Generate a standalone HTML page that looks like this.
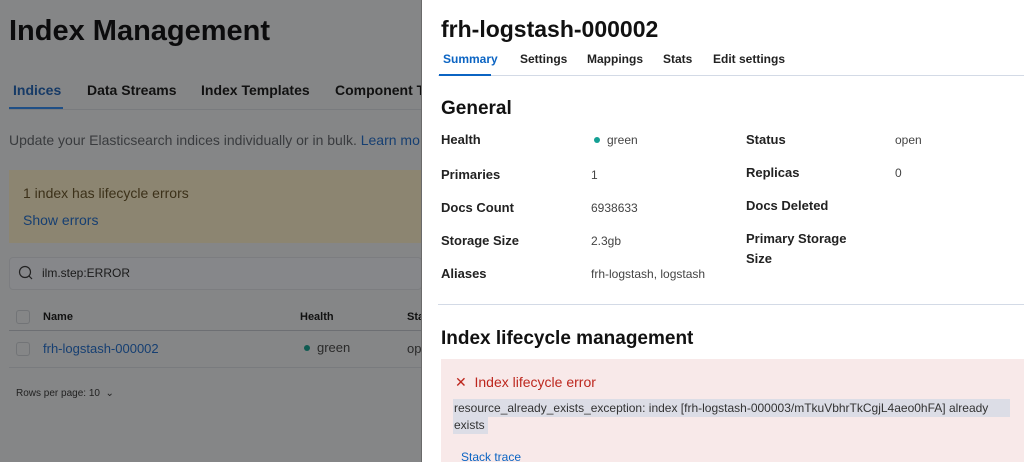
<!DOCTYPE html>
<html><head><style>
*{margin:0;padding:0;box-sizing:border-box}
html,body{width:1024px;height:462px;overflow:hidden}
body{position:relative;background:#858687;font-family:"Liberation Sans",sans-serif}
.a{position:absolute;white-space:nowrap}
</style></head><body>
<div class="a" style="left:9px;top:15px;font-size:29px;font-weight:bold;color:#0c0c0d">Index Management</div>
<div class="a" style="left:13px;top:82px;font-size:14px;font-weight:bold;color:#163a66">Indices</div>
<div class="a" style="left:9px;top:107px;width:54px;height:2px;background:#1f4f86"></div>
<div class="a" style="left:87px;top:82px;font-size:14px;font-weight:bold;color:#111">Data Streams</div>
<div class="a" style="left:201px;top:82px;font-size:14px;font-weight:bold;color:#111">Index Templates</div>
<div class="a" style="left:335px;top:82px;font-size:14px;font-weight:bold;color:#111">Component T</div>
<div class="a" style="left:9px;top:109px;width:413px;height:1px;background:#797b7e"></div>
<div class="a" style="left:9px;top:132px;font-size:14px;color:#393b3e">Update your Elasticsearch indices individually or in bulk. <span style="color:#163f72">Learn mo</span></div>
<div class="a" style="left:9px;top:170px;width:413px;height:73px;background:#8c8571"></div>
<div class="a" style="left:23px;top:185px;font-size:14px;color:#3c3119">1 index has lifecycle errors</div>
<div class="a" style="left:23px;top:212px;font-size:14px;color:#163f72">Show errors</div>
<div class="a" style="left:9px;top:257px;width:413px;height:33px;background:#86878a;border:1px solid #7c7d80;border-radius:4px"></div>
<svg class="a" style="left:18px;top:265px" width="16" height="16" viewBox="0 0 16 16"><circle cx="7" cy="7" r="5.5" fill="none" stroke="#222" stroke-width="1.2"/><path d="M11 11l3 3" stroke="#222" stroke-width="1.2"/></svg>
<div class="a" style="left:42px;top:266px;font-size:12px;color:#1a1a1a">ilm.step:ERROR</div>
<div class="a" style="left:16px;top:310px;width:14px;height:14px;border:1px solid #727477;border-radius:3px"></div>
<div class="a" style="left:43px;top:311px;font-size:11px;font-weight:bold;color:#111">Name</div>
<div class="a" style="left:300px;top:311px;font-size:11px;font-weight:bold;color:#111">Health</div>
<div class="a" style="left:407px;top:311px;font-size:11px;font-weight:bold;color:#111">Sta</div>
<div class="a" style="left:9px;top:330px;width:413px;height:1px;background:#6d6f73"></div>
<div class="a" style="left:16px;top:342px;width:14px;height:14px;border:1px solid #727477;border-radius:3px"></div>
<div class="a" style="left:43px;top:341px;font-size:13px;color:#163f72">frh-logstash-000002</div>
<div class="a" style="left:304px;top:345px;width:6px;height:6px;border-radius:50%;background:#0f5b52"></div>
<div class="a" style="left:317px;top:340px;font-size:13px;color:#2a2a2a">green</div>
<div class="a" style="left:407px;top:341px;font-size:13px;color:#2a2a2a">op</div>
<div class="a" style="left:9px;top:367px;width:413px;height:1px;background:#797b7e"></div>
<div class="a" style="left:16px;top:388px;font-size:10px;color:#222">Rows per page: 10 &nbsp;⌄</div>

<div class="a" style="left:421px;top:0;width:603px;height:462px;background:#fff;border-left:1px solid #6a6a6a"></div>
<div class="a" style="left:441px;top:16px;font-size:23px;font-weight:bold;color:#111">frh-logstash-000002</div>
<div class="a" style="left:443px;top:52px;font-size:12px;font-weight:bold;color:#0b64c3">Summary</div>
<div class="a" style="left:520px;top:52px;font-size:12px;font-weight:bold;color:#222">Settings</div>
<div class="a" style="left:587px;top:52px;font-size:12px;font-weight:bold;color:#222">Mappings</div>
<div class="a" style="left:663px;top:52px;font-size:12px;font-weight:bold;color:#222">Stats</div>
<div class="a" style="left:713px;top:52px;font-size:12px;font-weight:bold;color:#222">Edit settings</div>
<div class="a" style="left:438px;top:75px;width:586px;height:1px;background:#d3dae6"></div>
<div class="a" style="left:439px;top:74px;width:52px;height:2px;background:#0b64c3"></div>
<div class="a" style="left:441px;top:98px;font-size:19px;font-weight:bold;color:#111">General</div>
<div class="a" style="left:441px;top:130px;font-size:13px;font-weight:bold;color:#222;line-height:20px">Health</div>
<div class="a" style="left:594px;top:137px;width:6px;height:6px;border-radius:50%;background:#14a094"></div>
<div class="a" style="left:607px;top:130px;font-size:12px;color:#444;line-height:20px">green</div>
<div class="a" style="left:746px;top:130px;font-size:13px;font-weight:bold;color:#222;line-height:20px">Status</div>
<div class="a" style="left:895px;top:130px;font-size:12px;color:#444;line-height:20px">open</div>
<div class="a" style="left:441px;top:165px;font-size:13px;font-weight:bold;color:#222;line-height:20px">Primaries</div>
<div class="a" style="left:591px;top:165px;font-size:12px;color:#444;line-height:20px">1</div>
<div class="a" style="left:746px;top:163px;font-size:13px;font-weight:bold;color:#222;line-height:20px">Replicas</div>
<div class="a" style="left:895px;top:163px;font-size:12px;color:#444;line-height:20px">0</div>
<div class="a" style="left:441px;top:198px;font-size:13px;font-weight:bold;color:#222;line-height:20px">Docs Count</div>
<div class="a" style="left:591px;top:198px;font-size:12px;color:#444;line-height:20px">6938633</div>
<div class="a" style="left:746px;top:196px;font-size:13px;font-weight:bold;color:#222;line-height:20px">Docs Deleted</div>
<div class="a" style="left:441px;top:231px;font-size:13px;font-weight:bold;color:#222;line-height:20px">Storage Size</div>
<div class="a" style="left:591px;top:231px;font-size:12px;color:#444;line-height:20px">2.3gb</div>
<div class="a" style="left:746px;top:229px;font-size:13px;font-weight:bold;color:#222;line-height:20px">Primary Storage<br>Size</div>
<div class="a" style="left:441px;top:264px;font-size:13px;font-weight:bold;color:#222;line-height:20px">Aliases</div>
<div class="a" style="left:591px;top:264px;font-size:12px;color:#444;line-height:20px">frh-logstash, logstash</div>
<div class="a" style="left:438px;top:304px;width:586px;height:1px;background:#d3dae6"></div>
<div class="a" style="left:441px;top:328px;font-size:19px;font-weight:bold;color:#111">Index lifecycle management</div>
<div class="a" style="left:441px;top:359px;width:583px;height:103px;background:#f8e9e9"></div>
<div class="a" style="left:455px;top:374px;font-size:14px;color:#bd271e">✕ &nbsp;Index lifecycle error</div>
<div class="a" style="left:453px;top:399px;width:557px;height:18px;background:#dcdde6"></div>
<div class="a" style="left:453px;top:417px;width:35px;height:17px;background:#dcdde6"></div>
<div class="a" style="left:454px;top:400px;font-size:12px;color:#333;line-height:17px">resource_already_exists_exception: index [frh-logstash-000003/mTkuVbhrTkCgjL4aeo0hFA] already<br>exists</div>
<div class="a" style="left:461px;top:450px;font-size:12px;color:#0b64c3">Stack trace</div>
</body></html>
